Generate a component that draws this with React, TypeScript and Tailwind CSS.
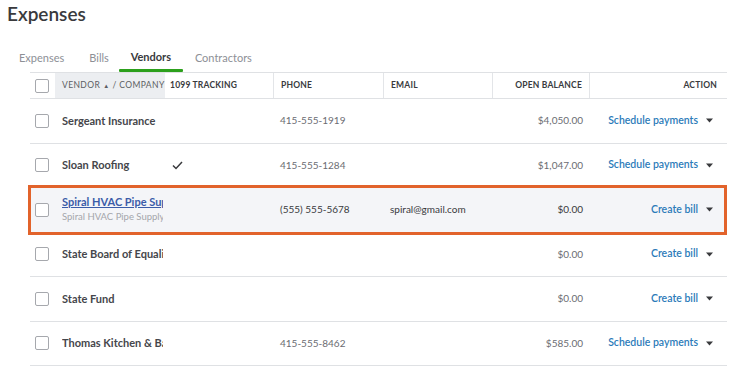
import React from "react";

type Row = {
  name: string;
  sub?: string;
  link?: boolean;
  tracked?: boolean;
  phone?: string;
  email?: string;
  balance: string;
  action: string;
  highlight?: boolean;
};

const rows: Row[] = [
  { name: "Sergeant Insurance", phone: "415-555-1919", balance: "$4,050.00", action: "Schedule payments" },
  { name: "Sloan Roofing", tracked: true, phone: "415-555-1284", balance: "$1,047.00", action: "Schedule payments" },
  {
    name: "Spiral HVAC Pipe Supply",
    sub: "Spiral HVAC Pipe Supply",
    link: true,
    phone: "(555) 555-5678",
    email: "spiral@gmail.com",
    balance: "$0.00",
    action: "Create bill",
    highlight: true,
  },
  { name: "State Board of Equalization", balance: "$0.00", action: "Create bill" },
  { name: "State Fund", balance: "$0.00", action: "Create bill" },
  { name: "Thomas Kitchen & Bath", phone: "415-555-8462", balance: "$585.00", action: "Schedule payments" },
];

function Box() {
  return <div className="w-[14px] h-[14px] border border-[#a6a8ad] rounded-[2px] bg-white" />;
}

function Caret() {
  return (
    <svg width="7" height="5" viewBox="0 0 7 5" className="ml-[8px]">
      <path d="M0 0.5 L7 0.5 L3.5 4.5 Z" fill="#393a3d" />
    </svg>
  );
}

export default function App() {
  return (
    <div
      className="w-[730px] h-[369px] bg-white overflow-hidden relative"
      style={{ fontFamily: "Lato, 'Open Sans', sans-serif" }}
    >
      <div className="pl-[7px] pt-[2px] text-[19px] font-semibold text-[#393a3d] leading-[24px]">Expenses</div>

      <div className="flex items-end h-[46px] pl-[19px] text-[11px]">
        <div className="text-[#8d9096] pb-[6px]">Expenses</div>
        <div className="text-[#8d9096] pb-[6px] ml-[25px]">Bills</div>
        <div className="ml-[10px] flex flex-col items-center w-[64px]">
          <div className="text-[#393a3d] font-bold pb-[4px]">Vendors</div>
          <div className="h-[3px] w-full bg-[#2ca01c] rounded-[1px]" />
        </div>
        <div className="text-[#8d9096] pb-[6px] ml-[12px]">Contractors</div>
      </div>

      <div className="ml-[30px] w-[697px]">
        {/* header */}
        <div className="flex h-[27px] border-t border-b border-[#dfe1e4] text-[8.5px] font-bold text-[#393a3d] uppercase tracking-[0.2px]">
          <div className="w-[25px] flex items-center pl-[5px]">
            <Box />
          </div>
          <div className="w-[110px] bg-[#eceef1] flex items-center pl-[7px] overflow-hidden whitespace-nowrap font-normal text-[#5c5e63] tracking-[0.4px]">
            VENDOR <span className="mx-[3px] text-[6px]">▲</span> / COMPANY
          </div>
          <div className="w-[108px] flex items-center pl-[5px]">1099 TRACKING</div>
          <div className="w-[110px] flex items-center pl-[7px] border-l border-[#e3e5e8]">PHONE</div>
          <div className="w-[109px] flex items-center pl-[7px] border-l border-[#e3e5e8]">EMAIL</div>
          <div className="w-[97px] flex items-center justify-end pr-[7px] border-l border-[#e3e5e8]">OPEN BALANCE</div>
          <div className="flex-1 flex items-center justify-end pr-[10px] border-l border-[#e3e5e8]">ACTION</div>
        </div>

        {rows.map((r, i) => (
          <div
            key={i}
            className={`relative flex h-[44.5px] border-b text-[10px] ${
              r.highlight ? "bg-[#f4f5f8] border-transparent" : "border-[#dfe1e4]"
            }`}
          >
            <div className="w-[25px] flex items-center pl-[5px]">
              <Box />
            </div>
            <div className="w-[110px] flex flex-col justify-center pl-[7px] pr-[2px] overflow-hidden whitespace-nowrap">
              {r.link ? (
                <>
                  <div className="text-[11px] font-bold text-[#3b5ca8] underline leading-[14px] overflow-hidden">{r.name}</div>
                  <div className="text-[9.5px] text-[#a4a6ab] leading-[14px] mt-[1px] overflow-hidden">{r.sub}</div>
                </>
              ) : (
                <div className="text-[11px] font-bold text-[#45464b] overflow-hidden">{r.name}</div>
              )}
            </div>
            <div className="w-[108px] flex items-center pl-[7px]">
              {r.tracked && (
                <svg width="11" height="9" viewBox="0 0 11 9">
                  <path d="M1 4.5 L4 7.5 L10 1" stroke="#393a3d" strokeWidth="1.5" fill="none" />
                </svg>
              )}
            </div>
            <div className={`w-[110px] flex items-center pl-[7px] ${r.highlight ? "text-[#393a3d]" : "text-[#6b6c72]"}`}>
              {r.phone}
            </div>
            <div className="w-[109px] flex items-center pl-[7px] text-[#393a3d]">{r.email}</div>
            <div className={`w-[97px] flex items-center justify-end pr-[6px] ${r.highlight ? "text-[#393a3d]" : "text-[#6b6c72]"}`}>
              {r.balance}
            </div>
            <div className="flex-1 flex items-center justify-end pr-[14px]">
              <span className="text-[10.5px] font-semibold text-[#2b7bb9]">{r.action}</span>
              <Caret />
            </div>
            {r.highlight && (
              <div className="absolute left-[-2px] right-[0px] top-[-3px] bottom-[-3px] border-[3px] border-[#e2632b] pointer-events-none" />
            )}
          </div>
        ))}
      </div>
    </div>
  );
}
